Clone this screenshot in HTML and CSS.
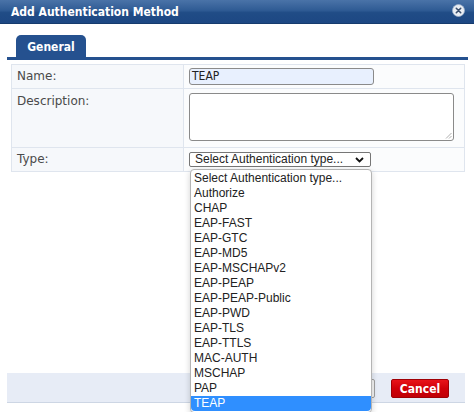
FILE: index.html
```html
<!DOCTYPE html>
<html>
<head>
<meta charset="utf-8">
<link rel="stylesheet" href="styles.css">
</head>
<body>
<div class="dialog">
  <div class="titlebar">
    <span class="title">Add Authentication Method</span>
    <span class="close">
      <svg width="13" height="13" viewBox="0 0 13 13"><circle cx="6.5" cy="6.5" r="6" fill="#e9edf3" stroke="#9fb2cc" stroke-width="0.8"/><path d="M4.3 4.3 L8.7 8.7 M8.7 4.3 L4.3 8.7" stroke="#3a4f6e" stroke-width="1.6" stroke-linecap="round"/></svg>
    </span>
  </div>
  <div class="tabs"><div class="tab">General</div></div>
  <div class="tabline"></div>
  <table class="form">
    <tr class="row-name">
      <td class="label">Name:</td>
      <td class="value"><div class="input">TEAP</div></td>
    </tr>
    <tr class="row-desc">
      <td class="label">Description:</td>
      <td class="value"><div class="textarea"><svg class="grip" width="7" height="7" viewBox="0 0 7 7"><path d="M6.5 1 L1 6.5 M6.5 4 L4 6.5" stroke="#999" stroke-width="0.8"/></svg></div></td>
    </tr>
    <tr class="row-type">
      <td class="label">Type:</td>
      <td class="value"><div class="select"><span>Select Authentication type...</span><svg class="chev" width="9" height="6" viewBox="0 0 9 6"><path d="M1 1 L4.5 4.5 L8 1" fill="none" stroke="#111" stroke-width="1.8"/></svg></div></td>
    </tr>
  </table>
  <div class="spacer"></div>
  <div class="footer">
    <button class="btn btn-save">Save</button>
    <button class="btn btn-cancel">Cancel</button>
  </div>
  <ul class="dropdown">
    <li>Select Authentication type...</li>
    <li>Authorize</li>
    <li>CHAP</li>
    <li>EAP-FAST</li>
    <li>EAP-GTC</li>
    <li>EAP-MD5</li>
    <li>EAP-MSCHAPv2</li>
    <li>EAP-PEAP</li>
    <li>EAP-PEAP-Public</li>
    <li>EAP-PWD</li>
    <li>EAP-TLS</li>
    <li>EAP-TTLS</li>
    <li>MAC-AUTH</li>
    <li>MSCHAP</li>
    <li>PAP</li>
    <li class="selected">TEAP</li>
  </ul>
</div>
</body>
</html>
```
FILE: styles.css
```css
html, body {
  margin: 0;
  padding: 0;
  background: #ffffff;
}
.dialog {
  position: relative;
  width: 474px;
  height: 412px;
  display: flex;
  flex-direction: column;
  overflow: hidden;
  font-family: "DejaVu Sans", Verdana, sans-serif;
}
.titlebar {
  height: 24px;
  flex: none;
  display: flex;
  align-items: center;
  justify-content: space-between;
  padding: 0 9px 0 11px;
  background: linear-gradient(to bottom, #4a73a8 0%, #2f5b94 45%, #204c86 55%, #1d4783 100%);
  border-bottom: 1px solid #163b6d;
  box-sizing: border-box;
}
.title {
  color: #ffffff;
  font-family: "DejaVu Sans Condensed", "DejaVu Sans", sans-serif;
  font-stretch: condensed;
  font-weight: bold;
  font-size: 12px;
}
.close {
  display: flex;
  margin-top: -2px;
}
.tabs {
  display: flex;
  padding: 11px 0 0 16px;
}
.tab {
  width: 70px;
  height: 22px;
  box-sizing: border-box;
  background: #25518f;
  border-radius: 5px 5px 0 0;
  color: #ffffff;
  font-family: "DejaVu Sans Condensed", "DejaVu Sans", sans-serif;
  font-stretch: condensed;
  font-weight: bold;
  font-size: 12px;
  display: flex;
  align-items: center;
  justify-content: center;
  padding-top: 1px;
}
.tabline {
  height: 3px;
  background: #25518f;
  margin: 0 6px 0 7px;
}
.form {
  margin: 4px 0 0 11px;
  width: 454px;
  border-collapse: collapse;
  border: 1px solid #dfe5ee;
}
.form td {
  border: 1px solid #dfe5ee;
  padding: 0;
  vertical-align: top;
}
.label {
  width: 172px;
  background: #f6f8fb;
  color: #4a4a4a;
  font-size: 12px;
  padding-left: 5px !important;
  box-sizing: border-box;
}
.value {
  background: #fbfcfd;
  padding-left: 5px !important;
}
.row-name td { height: 23px; }
.row-name .label { padding-top: 4px !important; }
.row-desc td { height: 58px; }
.row-desc .label { padding-top: 5px !important; }
.row-type td { height: 23px; }
.row-type .label { padding-top: 4px !important; }
.input {
  margin-top: 3px;
  width: 185px;
  height: 17px;
  box-sizing: border-box;
  border: 1px solid #8a8a8a;
  border-radius: 3px;
  background: #e8f0fe;
  font-family: "DejaVu Sans Condensed", "DejaVu Sans", sans-serif;
  font-stretch: condensed;
  font-size: 12px;
  color: #222;
  line-height: 15px;
  padding-left: 2px;
}
.textarea {
  position: relative;
  margin-top: 4px;
  width: 265px;
  height: 48px;
  box-sizing: border-box;
  border: 1px solid #8a8a8a;
  border-radius: 3px;
  background: #ffffff;
}
.grip {
  position: absolute;
  right: 1px;
  bottom: 1px;
}
.select {
  margin-top: 4px;
  width: 182px;
  height: 15px;
  box-sizing: border-box;
  border: 1px solid #767676;
  border-radius: 2px;
  background: #ffffff;
  font-family: "Liberation Sans", Arial, sans-serif;
  font-size: 12px;
  color: #222;
  line-height: 13px;
  display: flex;
  align-items: center;
  justify-content: space-between;
  padding: 0 6px 0 5px;
}
.spacer {
  flex: 1;
}
.footer {
  flex: none;
  height: 30px;
  margin: 0 9px 9px 7px;
  background: #e7ecf6;
  border-bottom: 1px solid #cdd6e4;
  box-sizing: border-box;
  display: flex;
  align-items: flex-start;
  justify-content: flex-end;
  gap: 16px;
  padding: 6px 16px 0 0;
}
.btn {
  height: 19px;
  box-sizing: border-box;
  font-family: "DejaVu Sans Condensed", "DejaVu Sans", sans-serif;
  font-stretch: condensed;
  font-weight: bold;
  font-size: 12px;
  border-radius: 2px;
  padding: 0;
}
.btn-save {
  width: 50px;
  background: #f3f3f3;
  border: 1px solid #a0a0a0;
  color: #333;
}
.btn-cancel {
  width: 58px;
  background: linear-gradient(to bottom, #e8141a 0%, #d00008 50%, #c00006 100%);
  border: 1px solid #a00005;
  color: #ffffff;
}
.dropdown {
  position: absolute;
  left: 190px;
  top: 169px;
  width: 182px;
  margin: 0;
  padding: 1px 0 1px 0;
  list-style: none;
  box-sizing: border-box;
  background: #ffffff;
  border: 1px solid #b4b4b4;
  border-radius: 4px;
  box-shadow: 0 2px 6px rgba(0,0,0,0.18);
  font-family: "Liberation Sans", Arial, sans-serif;
  font-size: 12px;
  color: #222;
  overflow: hidden;
}
.dropdown li {
  height: 15px;
  line-height: 15px;
  padding-left: 3px;
  white-space: nowrap;
}
.dropdown li.selected {
  background: #2f8fff;
  color: #ffffff;
  border-radius: 0 0 4px 4px;
}
```
